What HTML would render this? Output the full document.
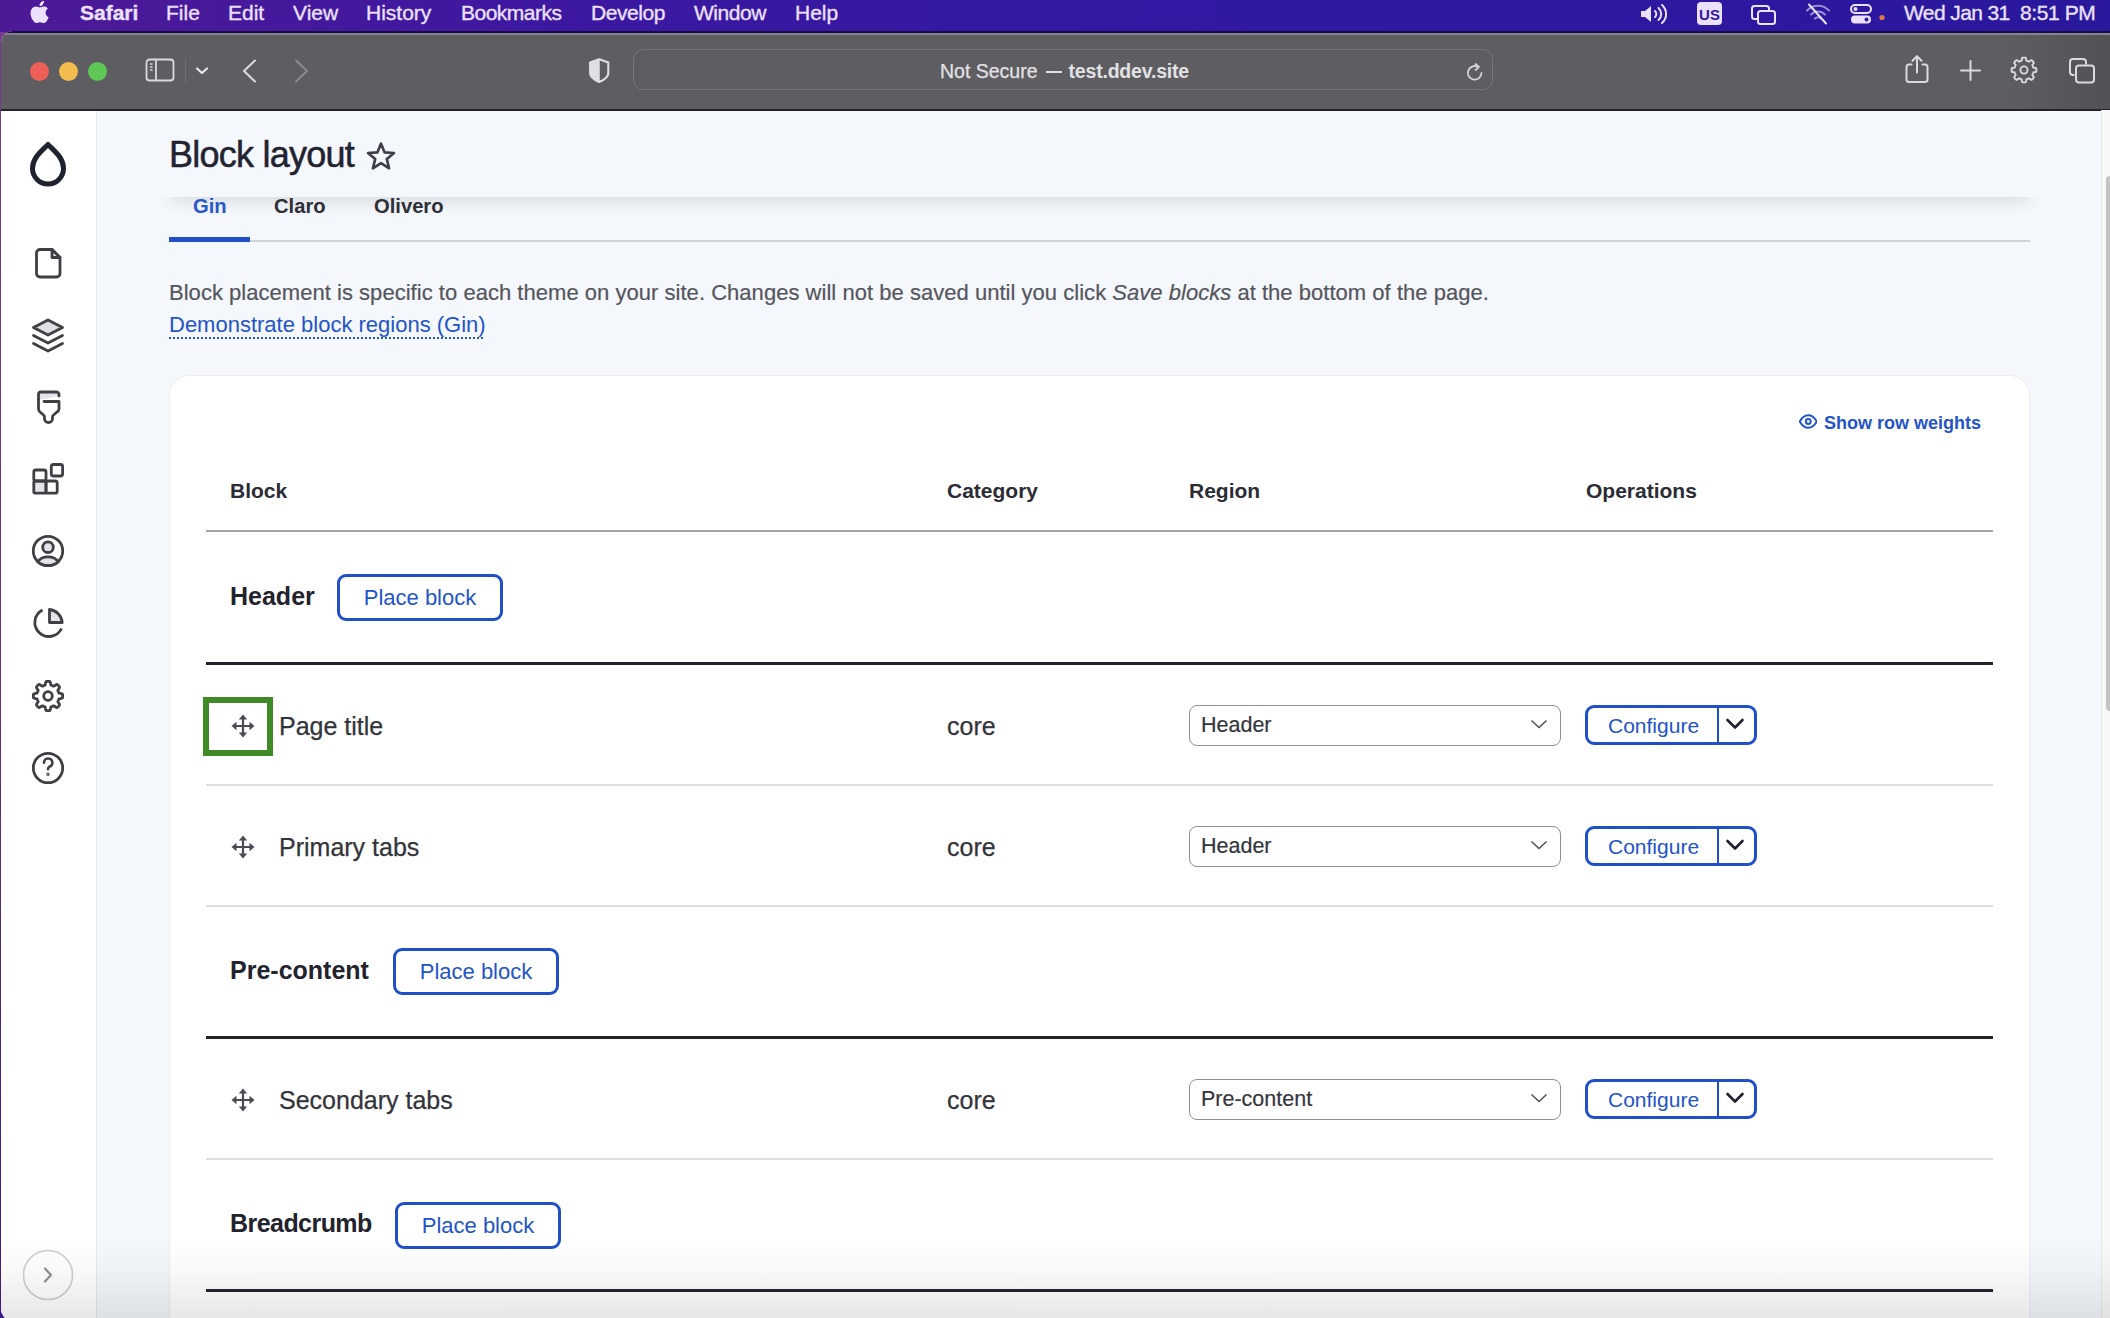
<!DOCTYPE html>
<html><head><meta charset="utf-8">
<style>
*{margin:0;padding:0;box-sizing:border-box}
html,body{width:2110px;height:1318px;overflow:hidden}
body{position:relative;background:linear-gradient(180deg,#7a3a98,#663680 45%,#3b1c8c);font-family:"Liberation Sans",sans-serif}
.a{position:absolute}
#menubar{left:0;top:0;width:2110px;height:32px;background:linear-gradient(90deg,#4d1a97 0%,#3d18a0 25%,#3318a2 50%,#2e18a0 75%,#2a189c 100%)}
.mi{position:absolute;top:0px;font-size:21px;line-height:25px;color:#ece0ff;white-space:nowrap;-webkit-text-stroke:0.35px #ece0ff}
#win{left:1px;top:31px;width:2109px;height:1291px;border-radius:12px 0 0 14px;overflow:hidden;background:#f6f8fb}
#pg{left:-1px;top:-31px;width:2110px;height:1318px}
#toolbar{left:1px;top:32px;width:2109px;height:77px;background:linear-gradient(90deg,#5e5d62 0%,#5e5d62 95%,#525156 100%)}
#tl1{left:0;top:31px;width:2110px;height:2px;background:#1a0c48}
#tl2{left:0;top:33px;width:2110px;height:1.5px;background:#85848a}
#tl3{left:0;top:109px;width:2110px;height:2px;background:#232328}
#content{left:0;top:111px;width:2110px;height:1208px;background:#f4f7fb}
#sidebar{left:1px;top:111px;width:96px;height:1208px;background:#fff;border-right:1px solid #e6e8ec}
#hdrbar{left:165px;top:111px;width:1870px;height:86px;background:#f4f7fb;box-shadow:0 10px 16px -6px rgba(0,0,0,0.12)}
#hdrbg{left:97px;top:111px;width:2013px;height:86px;background:#f4f7fb}
.t{position:absolute;white-space:nowrap;line-height:1}
#title{left:169px;top:137px;font-size:36px;color:#222330;letter-spacing:-0.75px;-webkit-text-stroke:0.5px #222330}
.tab{top:196px;font-size:20.2px;font-weight:bold;color:#2e2f37}
#desc{left:169px;top:282px;font-size:22px;color:#55565d;-webkit-text-stroke:0.2px #55565d;letter-spacing:0.03px}
#demo{left:169px;top:314px;font-size:22px;color:#2354c8;text-decoration:underline dotted 1.5px;text-underline-offset:5px}
#card{left:169px;top:375px;width:1861px;height:1000px;background:#fff;border-radius:20px;border:1px solid #eceef1}
.th{top:480px;font-size:21px;font-weight:bold;color:#2b2c35}
.hline{position:absolute;left:206px;width:1787px;height:2px;background:#a3a3a8}
.thick{position:absolute;left:206px;width:1787px;height:3px;background:#22232d}
.thin{position:absolute;left:206px;width:1787px;height:2px;background:#dedfe3}
.rg{font-size:25px;font-weight:bold;color:#22232d}
.btn{position:absolute;border:3px solid #1f50c8;border-radius:9px;background:#fff;color:#2354c8;font-size:22px;text-align:center}
.bt{font-size:25px;color:#33343b;-webkit-text-stroke:0.25px #33343b}
.cat{font-size:25px;color:#33343b;-webkit-text-stroke:0.25px #33343b}
.selt{position:absolute;left:1201px;font-size:21.5px;color:#34353c;-webkit-text-stroke:0.2px #34353c;white-space:nowrap;line-height:1}
.mv{position:absolute;left:230px}
.sel{position:absolute;left:1189px;width:372px;height:41px;border:1.5px solid #8f9096;border-radius:8px;background:#fff}
.cfg{position:absolute;left:1585px;width:172px;height:40px;border:3px solid #1f50c8;border-radius:9px;background:#fff}
.dot{width:19px;height:19px;border-radius:50%}
#url{left:632px;top:17px;width:860px;height:41px;border:1.5px solid #77767b;border-radius:10px}
</style></head>
<body>
<div id="menubar" class="a">
  <svg class="a" style="left:29px;top:-2px" width="24" height="28.4" viewBox="0 0 22 26"><path fill="#ece0ff" d="M15.2 13.6 c0-2.6 2.1-3.8 2.2-3.9 -1.2-1.8-3.1-2-3.7-2 -1.6-.2-3.1.9-3.9.9 -.8 0-2-.9-3.3-.9 -1.7 0-3.3 1-4.2 2.5 -1.8 3.1-.5 7.7 1.3 10.2 .9 1.2 1.9 2.6 3.2 2.6 1.3-.1 1.8-.8 3.3-.8 1.6 0 2 .8 3.4.8 1.4 0 2.3-1.3 3.1-2.5 1-1.4 1.4-2.8 1.4-2.9 0 0-2.8-1.1-2.8-4.1z M12.7 5.9 c.7-.9 1.2-2.1 1.1-3.3 -1 0-2.3.7-3 1.6 -.7.8-1.3 2-1.1 3.2 1.1.1 2.3-.6 3-1.5z"/></svg>
  <svg class="a" style="left:1638px;top:2px" width="34" height="24" viewBox="0 0 34 24" fill="none" stroke="#ece0ff" stroke-linecap="round"><path d="M3 9 H7 L13 4 V20 L7 15 H3 Z" fill="#ece0ff" stroke="none"/><path d="M17 9 A4 4 0 0 1 17 15" stroke-width="2"/><path d="M20.5 6 A8 8 0 0 1 20.5 18" stroke-width="2"/><path d="M24 3 A12 12 0 0 1 24 21" stroke-width="2"/></svg>
  <div class="a" style="left:1697px;top:2px;width:25px;height:23px;background:#ece0ff;border-radius:4px;color:#3318a2;font-size:15px;font-weight:bold;line-height:25px;text-align:center">US</div>
  <svg class="a" style="left:1749px;top:2px" width="30" height="24" viewBox="0 0 30 24" fill="none" stroke="#ece0ff" stroke-width="2"><rect x="3" y="4" width="17" height="13" rx="2.5"/><rect x="9" y="9" width="17" height="13" rx="2.5" fill="#3318a2"/></svg>
  <svg class="a" style="left:1804px;top:2px" width="28" height="24" viewBox="0 0 28 24" fill="none" stroke="#9d8fd6" stroke-width="2" stroke-linecap="round"><path d="M3 8.5 A15 15 0 0 1 25 8.5"/><path d="M7 12.5 A9.5 9.5 0 0 1 21 12.5"/><path d="M11 16.5 A4 4 0 0 1 17 16.5"/><path d="M5 2.5 L22 21.5" stroke="#ece0ff"/></svg>
  <svg class="a" style="left:1849px;top:2px" width="40" height="24" viewBox="0 0 40 24" fill="none"><rect x="2" y="3" width="20" height="8" rx="4" stroke="#ece0ff" stroke-width="2"/><circle cx="6.5" cy="7" r="2" fill="#ece0ff"/><rect x="2" y="13.5" width="20" height="8" rx="4" fill="#ece0ff"/><circle cx="17.5" cy="17.5" r="2" fill="#3318a2"/><circle cx="33" cy="15.5" r="2.6" fill="#e07a4a"/></svg>
  <span class="mi" style="left:80px;font-weight:bold">Safari</span>
  <span class="mi" style="left:166px">File</span>
  <span class="mi" style="left:228px">Edit</span>
  <span class="mi" style="left:293px">View</span>
  <span class="mi" style="left:366px">History</span>
  <span class="mi" style="left:461px;letter-spacing:-0.5px">Bookmarks</span>
  <span class="mi" style="left:591px;letter-spacing:-0.45px">Develop</span>
  <span class="mi" style="left:694px;letter-spacing:-0.45px">Window</span>
  <span class="mi" style="left:795px">Help</span>
  <span class="mi" style="left:1904px;letter-spacing:-0.6px">Wed Jan 31</span><span class="mi" style="left:2020px;letter-spacing:-0.4px">8:51 PM</span>
</div>
<div id="win" class="a"><div id="pg" class="a">
  <div id="toolbar" class="a">
    <div class="a dot" style="left:29px;top:30px;background:#ee5f57"></div>
    <div class="a dot" style="left:58px;top:30px;background:#f3bc4f"></div>
    <div class="a dot" style="left:87px;top:30px;background:#5fc756"></div>
    <svg class="a" style="left:140px;top:24px" width="40" height="30" viewBox="0 0 40 30" fill="none" stroke="#dadade" stroke-width="1.8">
      <rect x="5.5" y="3.5" width="27" height="21" rx="3"/>
      <line x1="15" y1="3.5" x2="15" y2="24.5"/>
      <line x1="9" y1="8" x2="11.5" y2="8" stroke-width="1.3"/><line x1="9" y1="11" x2="11.5" y2="11" stroke-width="1.3"/><line x1="9" y1="14" x2="11.5" y2="14" stroke-width="1.3"/>
    </svg>
    <div class="a" style="left:184px;top:26px;width:1px;height:25px;background:#6d6c71"></div>
    <svg class="a" style="left:193px;top:34px" width="16" height="10" viewBox="0 0 16 10" fill="none" stroke="#e8e8ea" stroke-width="2.2" stroke-linecap="round" stroke-linejoin="round"><path d="M3 2.5 L8 7 L13 2.5"/></svg>
    <svg class="a" style="left:238px;top:26px" width="22" height="26" viewBox="0 0 22 26" fill="none" stroke="#dadade" stroke-width="2" stroke-linecap="round" stroke-linejoin="round"><path d="M16 2.5 L5 13 L16 23.5"/></svg>
    <svg class="a" style="left:289px;top:26px" width="22" height="26" viewBox="0 0 22 26" fill="none" stroke="#8b8a8f" stroke-width="2" stroke-linecap="round" stroke-linejoin="round"><path d="M6 2.5 L17 13 L6 23.5"/></svg>
    <svg class="a" style="left:585px;top:24px" width="28" height="30" viewBox="0 0 28 30"><path d="M13.2 3.2 L22.3 6.4 V17 C22.3 21 18 24 13.2 26 C8.4 24 4.1 21 4.1 17 V6.4 Z" fill="none" stroke="#e0e0e4" stroke-width="2.1" stroke-linejoin="round"/><path d="M13.2 3.2 V26 C8.4 24 4.1 21 4.1 17 V6.4 Z" fill="#e0e0e4" stroke="#e0e0e4" stroke-width="1" stroke-linejoin="round"/></svg>
    <div class="a" id="url"></div>
    <div class="a" style="left:0;top:24px;width:2109px;text-align:center;padding-left:16px;font-size:19.5px;line-height:30px;color:#e9e9ec;white-space:nowrap"><span style="position:absolute;left:939px;color:#e2e2e5;-webkit-text-stroke:0.25px #e2e2e5">Not Secure<span style="display:inline-block;width:16px;height:1.8px;background:#e2e2e5;vertical-align:middle;margin:0 7px 0 8px;position:relative;top:-1px"></span><b style="font-weight:bold;letter-spacing:-0.2px;-webkit-text-stroke:0">test.ddev.site</b></span></div>
    <svg class="a" style="left:1462px;top:28.5px" width="24" height="24" viewBox="0 0 24 24" fill="none" stroke="#d5d5d8" stroke-width="1.8" stroke-linecap="round"><path d="M18.5 12 A6.8 6.8 0 1 1 14.8 5.8"/><path d="M12.5 3 L16 5.9 L12.6 9" stroke-linejoin="round"/></svg>
    <svg class="a" style="left:1900px;top:20px" width="32" height="36" viewBox="0 0 32 36" fill="none" stroke="#dadade" stroke-width="2" stroke-linecap="round" stroke-linejoin="round"><path d="M10.5 12.5 H8 A2.5 2.5 0 0 0 5.5 15 V27.5 A2.5 2.5 0 0 0 8 30 H24 A2.5 2.5 0 0 0 26.5 27.5 V15 A2.5 2.5 0 0 0 24 12.5 H21.5"/><path d="M16 4.5 V20.5"/><path d="M11.5 8.8 L16 4.3 L20.5 8.8"/></svg>
    <svg class="a" style="left:1956px;top:26px" width="26" height="26" viewBox="0 0 26 26" fill="none" stroke="#dadade" stroke-width="2" stroke-linecap="round"><path d="M13.5 3 V22 M4 12.5 H23"/></svg>
    <svg class="a" style="left:2007px;top:22px" width="32" height="32" viewBox="0 0 32 32" fill="none" stroke="#dadade" stroke-width="1.9" stroke-linejoin="round"><path d="M28.40 16.00 L28.40 16.24 L28.39 16.49 L28.38 16.73 L28.36 16.97 L28.34 17.22 L28.31 17.46 L28.25 17.69 L27.94 17.89 L27.43 18.04 L26.79 18.15 L26.15 18.23 L25.63 18.31 L25.33 18.43 L25.24 18.61 L25.19 18.79 L25.13 18.97 L25.07 19.15 L25.01 19.32 L24.94 19.50 L24.87 19.67 L24.80 19.85 L24.72 20.02 L24.64 20.19 L24.55 20.36 L24.47 20.53 L24.38 20.69 L24.31 20.87 L24.45 21.18 L24.75 21.60 L25.15 22.11 L25.52 22.64 L25.78 23.11 L25.86 23.46 L25.74 23.68 L25.59 23.87 L25.43 24.05 L25.27 24.24 L25.11 24.42 L24.94 24.59 L24.77 24.77 L24.59 24.94 L24.42 25.11 L24.24 25.27 L24.05 25.43 L23.87 25.59 L23.68 25.74 L23.46 25.86 L23.11 25.78 L22.64 25.52 L22.11 25.15 L21.60 24.75 L21.18 24.45 L20.87 24.31 L20.69 24.38 L20.53 24.47 L20.36 24.55 L20.19 24.64 L20.02 24.72 L19.85 24.80 L19.67 24.87 L19.50 24.94 L19.32 25.01 L19.15 25.07 L18.97 25.13 L18.79 25.19 L18.61 25.24 L18.43 25.33 L18.31 25.63 L18.23 26.15 L18.15 26.79 L18.04 27.43 L17.89 27.94 L17.69 28.25 L17.46 28.31 L17.22 28.34 L16.97 28.36 L16.73 28.38 L16.49 28.39 L16.24 28.40 L16.00 28.40 L15.76 28.40 L15.51 28.39 L15.27 28.38 L15.03 28.36 L14.78 28.34 L14.54 28.31 L14.31 28.25 L14.11 27.94 L13.96 27.43 L13.85 26.79 L13.77 26.15 L13.69 25.63 L13.57 25.33 L13.39 25.24 L13.21 25.19 L13.03 25.13 L12.85 25.07 L12.68 25.01 L12.50 24.94 L12.33 24.87 L12.15 24.80 L11.98 24.72 L11.81 24.64 L11.64 24.55 L11.47 24.47 L11.31 24.38 L11.13 24.31 L10.82 24.45 L10.40 24.75 L9.89 25.15 L9.36 25.52 L8.89 25.78 L8.54 25.86 L8.32 25.74 L8.13 25.59 L7.95 25.43 L7.76 25.27 L7.58 25.11 L7.41 24.94 L7.23 24.77 L7.06 24.59 L6.89 24.42 L6.73 24.24 L6.57 24.05 L6.41 23.87 L6.26 23.68 L6.14 23.46 L6.22 23.11 L6.48 22.64 L6.85 22.11 L7.25 21.60 L7.55 21.18 L7.69 20.87 L7.62 20.69 L7.53 20.53 L7.45 20.36 L7.36 20.19 L7.28 20.02 L7.20 19.85 L7.13 19.67 L7.06 19.50 L6.99 19.32 L6.93 19.15 L6.87 18.97 L6.81 18.79 L6.76 18.61 L6.67 18.43 L6.37 18.31 L5.85 18.23 L5.21 18.15 L4.57 18.04 L4.06 17.89 L3.75 17.69 L3.69 17.46 L3.66 17.22 L3.64 16.97 L3.62 16.73 L3.61 16.49 L3.60 16.24 L3.60 16.00 L3.60 15.76 L3.61 15.51 L3.62 15.27 L3.64 15.03 L3.66 14.78 L3.69 14.54 L3.75 14.31 L4.06 14.11 L4.57 13.96 L5.21 13.85 L5.85 13.77 L6.37 13.69 L6.67 13.57 L6.76 13.39 L6.81 13.21 L6.87 13.03 L6.93 12.85 L6.99 12.68 L7.06 12.50 L7.13 12.33 L7.20 12.15 L7.28 11.98 L7.36 11.81 L7.45 11.64 L7.53 11.47 L7.62 11.31 L7.69 11.13 L7.55 10.82 L7.25 10.40 L6.85 9.89 L6.48 9.36 L6.22 8.89 L6.14 8.54 L6.26 8.32 L6.41 8.13 L6.57 7.95 L6.73 7.76 L6.89 7.58 L7.06 7.41 L7.23 7.23 L7.41 7.06 L7.58 6.89 L7.76 6.73 L7.95 6.57 L8.13 6.41 L8.32 6.26 L8.54 6.14 L8.89 6.22 L9.36 6.48 L9.89 6.85 L10.40 7.25 L10.82 7.55 L11.13 7.69 L11.31 7.62 L11.47 7.53 L11.64 7.45 L11.81 7.36 L11.98 7.28 L12.15 7.20 L12.33 7.13 L12.50 7.06 L12.68 6.99 L12.85 6.93 L13.03 6.87 L13.21 6.81 L13.39 6.76 L13.57 6.67 L13.69 6.37 L13.77 5.85 L13.85 5.21 L13.96 4.57 L14.11 4.06 L14.31 3.75 L14.54 3.69 L14.78 3.66 L15.03 3.64 L15.27 3.62 L15.51 3.61 L15.76 3.60 L16.00 3.60 L16.24 3.60 L16.49 3.61 L16.73 3.62 L16.97 3.64 L17.22 3.66 L17.46 3.69 L17.69 3.75 L17.89 4.06 L18.04 4.57 L18.15 5.21 L18.23 5.85 L18.31 6.37 L18.43 6.67 L18.61 6.76 L18.79 6.81 L18.97 6.87 L19.15 6.93 L19.32 6.99 L19.50 7.06 L19.67 7.13 L19.85 7.20 L20.02 7.28 L20.19 7.36 L20.36 7.45 L20.53 7.53 L20.69 7.62 L20.87 7.69 L21.18 7.55 L21.60 7.25 L22.11 6.85 L22.64 6.48 L23.11 6.22 L23.46 6.14 L23.68 6.26 L23.87 6.41 L24.05 6.57 L24.24 6.73 L24.42 6.89 L24.59 7.06 L24.77 7.23 L24.94 7.41 L25.11 7.58 L25.27 7.76 L25.43 7.95 L25.59 8.13 L25.74 8.32 L25.86 8.54 L25.78 8.89 L25.52 9.36 L25.15 9.89 L24.75 10.40 L24.45 10.82 L24.31 11.13 L24.38 11.31 L24.47 11.47 L24.55 11.64 L24.64 11.81 L24.72 11.98 L24.80 12.15 L24.87 12.33 L24.94 12.50 L25.01 12.68 L25.07 12.85 L25.13 13.03 L25.19 13.21 L25.24 13.39 L25.33 13.57 L25.63 13.69 L26.15 13.77 L26.79 13.85 L27.43 13.96 L27.94 14.11 L28.25 14.31 L28.31 14.54 L28.34 14.78 L28.36 15.03 L28.38 15.27 L28.39 15.51 L28.40 15.76 Z"/><circle cx="16" cy="16" r="3.6"/></svg>
    <svg class="a" style="left:2066px;top:24px" width="32" height="30" viewBox="0 0 32 30" fill="none" stroke="#dadade" stroke-width="2"><path d="M7.5 19 H6 A3 3 0 0 1 3 16 V6 A3 3 0 0 1 6 3 H16 A3 3 0 0 1 19 6 V8.5"/><rect x="9" y="9.5" width="18" height="17" rx="3"/></svg>
  </div>
  <div id="tl1" class="a"></div><div id="tl2" class="a"></div><div id="tl3" class="a"></div>
  <div id="content" class="a"></div>
  <div id="sidebar" class="a"></div>
  <div id="hdrbar" class="a"></div>
  <div id="hdrbg" class="a"></div>
  <svg class="a" style="left:27px;top:138px" width="42" height="52" viewBox="0 0 42 52" fill="none" stroke="#1f2230" stroke-width="5"><path d="M21 6.5 C14 13.5 5.5 20 5.5 30.5 A15.5 15.5 0 0 0 36.5 30.5 C36.5 20 28 13.5 21 6.5 Z" stroke-linejoin="round"/></svg>
  <svg class="a" style="left:28px;top:243px" width="40" height="40" viewBox="0 0 40 40" fill="none" stroke="#3f4045" stroke-width="2.8" stroke-linejoin="round"><path d="M24 6.5 H12 A3.5 3.5 0 0 0 8.5 10 V30.5 A3.5 3.5 0 0 0 12 34 H28.5 A3.5 3.5 0 0 0 32 30.5 V14.5 Z"/><path d="M24 6.5 V14.5 H32 Z" fill="#e3e4e8"/></svg>
  <svg class="a" style="left:28px;top:315px" width="40" height="40" viewBox="0 0 40 40" fill="none" stroke="#3f4045" stroke-width="2.8" stroke-linejoin="round" stroke-linecap="round"><path d="M20 5 L34.5 12.5 L20 20 L5.5 12.5 Z" fill="#dfe0e4"/><path d="M5.5 20.5 L20 28 L34.5 20.5"/><path d="M5.5 28.5 L20 36 L34.5 28.5"/></svg>
  <svg class="a" style="left:28px;top:387px" width="40" height="40" viewBox="0 0 40 40" fill="none" stroke="#3f4045" stroke-width="2.8" stroke-linejoin="round" stroke-linecap="round"><path d="M10.5 13 V7.5 A2.5 2.5 0 0 1 13 5 H28.5 A2.5 2.5 0 0 1 31 7.5 V9" fill="#e3e4e8"/><path d="M10.5 13 V22 A4 4 0 0 0 12 25 L15.5 28 A2.5 2.5 0 0 1 16.5 30 V31.5 A4 4 0 0 0 24.5 31.5 V30 A2.5 2.5 0 0 1 25.5 28 L29 25 A4 4 0 0 0 31 22 V14.5 H16"/></svg>
  <svg class="a" style="left:28px;top:459px" width="40" height="40" viewBox="0 0 40 40" fill="none" stroke="#3f4045" stroke-width="2.8" stroke-linejoin="round"><rect x="5.8" y="22" width="12.2" height="12.2" rx="1.2" fill="#e3e4e8"/><rect x="5.8" y="11" width="12.2" height="11" rx="2"/><rect x="18" y="22" width="11.2" height="12.2" rx="2"/><rect x="23.3" y="5.5" width="11.3" height="11.5" rx="2"/></svg>
  <svg class="a" style="left:28px;top:531px" width="40" height="40" viewBox="0 0 40 40" fill="none" stroke="#3f4045" stroke-width="2.8"><circle cx="20" cy="20" r="14.7"/><circle cx="20" cy="16.2" r="5.3" fill="#e3e4e8"/><path d="M9.8 30.8 C12 27 16 25.8 20 25.8 C24 25.8 28 27 30.2 30.8 C27 33.6 23.5 34.5 20 34.5 C16.5 34.5 13 33.6 9.8 30.8 Z" fill="#e3e4e8"/></svg>
  <svg class="a" style="left:28px;top:603px" width="40" height="40" viewBox="0 0 40 40" fill="none" stroke="#3f4045" stroke-width="2.8"><path d="M14.5 7 A14 14 0 1 0 33.5 25.5"/><path d="M21.5 6.5 A14 14 0 0 1 34.2 19.5 H21.5 Z" fill="#e3e4e8" stroke-linejoin="round"/></svg>
  <svg class="a" style="left:28px;top:676px" width="40" height="40" viewBox="0 0 40 40" fill="none" stroke="#3f4045" stroke-width="2.8" stroke-linejoin="round"><path d="M34.70 20.00 L34.69 20.38 L34.68 20.77 L34.65 21.15 L34.62 21.54 L34.43 21.90 L33.91 22.20 L33.13 22.43 L32.27 22.61 L31.49 22.76 L30.96 22.94 L30.74 23.18 L30.65 23.46 L30.56 23.74 L30.46 24.01 L30.35 24.29 L30.23 24.56 L30.11 24.82 L29.98 25.08 L29.84 25.34 L29.83 25.68 L30.08 26.18 L30.52 26.83 L31.01 27.57 L31.39 28.28 L31.54 28.86 L31.42 29.25 L31.18 29.55 L30.92 29.84 L30.66 30.12 L30.39 30.39 L30.12 30.66 L29.84 30.92 L29.55 31.18 L29.25 31.42 L28.86 31.54 L28.28 31.39 L27.57 31.01 L26.83 30.52 L26.18 30.08 L25.68 29.83 L25.34 29.84 L25.08 29.98 L24.82 30.11 L24.56 30.23 L24.29 30.35 L24.01 30.46 L23.74 30.56 L23.46 30.65 L23.18 30.74 L22.94 30.96 L22.76 31.49 L22.61 32.27 L22.43 33.13 L22.20 33.91 L21.90 34.43 L21.54 34.62 L21.15 34.65 L20.77 34.68 L20.38 34.69 L20.00 34.70 L19.62 34.69 L19.23 34.68 L18.85 34.65 L18.46 34.62 L18.10 34.43 L17.80 33.91 L17.57 33.13 L17.39 32.27 L17.24 31.49 L17.06 30.96 L16.82 30.74 L16.54 30.65 L16.26 30.56 L15.99 30.46 L15.71 30.35 L15.44 30.23 L15.18 30.11 L14.92 29.98 L14.66 29.84 L14.32 29.83 L13.82 30.08 L13.17 30.52 L12.43 31.01 L11.72 31.39 L11.14 31.54 L10.75 31.42 L10.45 31.18 L10.16 30.92 L9.88 30.66 L9.61 30.39 L9.34 30.12 L9.08 29.84 L8.82 29.55 L8.58 29.25 L8.46 28.86 L8.61 28.28 L8.99 27.57 L9.48 26.83 L9.92 26.18 L10.17 25.68 L10.16 25.34 L10.02 25.08 L9.89 24.82 L9.77 24.56 L9.65 24.29 L9.54 24.01 L9.44 23.74 L9.35 23.46 L9.26 23.18 L9.04 22.94 L8.51 22.76 L7.73 22.61 L6.87 22.43 L6.09 22.20 L5.57 21.90 L5.38 21.54 L5.35 21.15 L5.32 20.77 L5.31 20.38 L5.30 20.00 L5.31 19.62 L5.32 19.23 L5.35 18.85 L5.38 18.46 L5.57 18.10 L6.09 17.80 L6.87 17.57 L7.73 17.39 L8.51 17.24 L9.04 17.06 L9.26 16.82 L9.35 16.54 L9.44 16.26 L9.54 15.99 L9.65 15.71 L9.77 15.44 L9.89 15.18 L10.02 14.92 L10.16 14.66 L10.17 14.32 L9.92 13.82 L9.48 13.17 L8.99 12.43 L8.61 11.72 L8.46 11.14 L8.58 10.75 L8.82 10.45 L9.08 10.16 L9.34 9.88 L9.61 9.61 L9.88 9.34 L10.16 9.08 L10.45 8.82 L10.75 8.58 L11.14 8.46 L11.72 8.61 L12.43 8.99 L13.17 9.48 L13.82 9.92 L14.32 10.17 L14.66 10.16 L14.92 10.02 L15.18 9.89 L15.44 9.77 L15.71 9.65 L15.99 9.54 L16.26 9.44 L16.54 9.35 L16.82 9.26 L17.06 9.04 L17.24 8.51 L17.39 7.73 L17.57 6.87 L17.80 6.09 L18.10 5.57 L18.46 5.38 L18.85 5.35 L19.23 5.32 L19.62 5.31 L20.00 5.30 L20.38 5.31 L20.77 5.32 L21.15 5.35 L21.54 5.38 L21.90 5.57 L22.20 6.09 L22.43 6.87 L22.61 7.73 L22.76 8.51 L22.94 9.04 L23.18 9.26 L23.46 9.35 L23.74 9.44 L24.01 9.54 L24.29 9.65 L24.56 9.77 L24.82 9.89 L25.08 10.02 L25.34 10.16 L25.68 10.17 L26.18 9.92 L26.83 9.48 L27.57 8.99 L28.28 8.61 L28.86 8.46 L29.25 8.58 L29.55 8.82 L29.84 9.08 L30.12 9.34 L30.39 9.61 L30.66 9.88 L30.92 10.16 L31.18 10.45 L31.42 10.75 L31.54 11.14 L31.39 11.72 L31.01 12.43 L30.52 13.17 L30.08 13.82 L29.83 14.32 L29.84 14.66 L29.98 14.92 L30.11 15.18 L30.23 15.44 L30.35 15.71 L30.46 15.99 L30.56 16.26 L30.65 16.54 L30.74 16.82 L30.96 17.06 L31.49 17.24 L32.27 17.39 L33.13 17.57 L33.91 17.80 L34.43 18.10 L34.62 18.46 L34.65 18.85 L34.68 19.23 L34.69 19.62 Z"/><circle cx="20" cy="20" r="4.3"/></svg>
  <svg class="a" style="left:28px;top:748px" width="40" height="40" viewBox="0 0 40 40" fill="none" stroke="#3f4045" stroke-width="2.8" stroke-linecap="round"><circle cx="20" cy="20" r="14.7"/><path d="M16 14.8 A4.2 4.2 0 1 1 21.3 18.8 C20.4 19.3 20 20 20 21.2" stroke-width="2.6"/><circle cx="20" cy="26.3" r="0.5" fill="#3f4045" stroke-width="2.4"/></svg>
  <svg class="a" style="left:22px;top:1249px" width="52" height="52" viewBox="0 0 52 52" fill="none"><circle cx="26" cy="26" r="24.5" stroke="#cfcfd2" stroke-width="1.6"/><path d="M23 19.5 L29 26 L23 32.5" stroke="#8d8e93" stroke-width="2.2" stroke-linecap="round" stroke-linejoin="round"/></svg>
  <div class="t" id="title">Block layout</div>
  <svg class="a" style="left:364px;top:140px" width="34" height="34" viewBox="0 0 34 34" fill="none" stroke="#3c3d48" stroke-width="2.6" stroke-linejoin="round"><path d="M17 3.5 L20.6 12.4 L30 13 L22.8 19.1 L25.1 28.3 L17 23.2 L8.9 28.3 L11.2 19.1 L4 13 L13.4 12.4 Z"/></svg>
  <div class="t tab" style="left:193px;color:#2757c9">Gin</div>
  <div class="t tab" style="left:274px">Claro</div>
  <div class="t tab" style="left:374px">Olivero</div>
  <div class="a" style="left:169px;top:240px;width:1861px;height:2px;background:#d2d4d9"></div>
  <div class="a" style="left:169px;top:237px;width:81px;height:5px;background:#1f50c8"></div>
  <div class="t" id="desc">Block placement is specific to each theme on your site. Changes will not be saved until you click <i>Save blocks</i> at the bottom of the page.</div>
  <div class="t" id="demo">Demonstrate block regions (Gin)</div>
  <div class="a" id="card"></div>
  <div class="t" style="left:1824px;top:413.5px;font-size:18px;font-weight:bold;color:#2354c8">Show row weights</div>
  <div class="t th" style="left:230px">Block</div>
  <div class="t th" style="left:947px">Category</div>
  <div class="t th" style="left:1189px">Region</div>
  <div class="t th" style="left:1586px">Operations</div>
  <div class="hline" style="top:530px"></div>
  <div class="t rg" style="left:230px;top:584px">Header</div>
  <div class="btn" style="left:337px;top:574px;width:166px;height:47px;line-height:41px">Place block</div>
  <div class="thick" style="top:662px"></div>
  <div class="t bt" style="left:279px;top:714px">Page title</div>
  <div class="t cat" style="left:947px;top:714px">core</div>
  <div class="sel" style="top:705px"></div>
  <div class="cfg" style="top:705px"></div>
  <svg class="mv" style="top:713px" width="26" height="26" viewBox="0 0 26 26"><g fill="#4a4b55"><path d="M13 1.5 L17.2 6.5 H8.8 Z"/><path d="M13 24.5 L17.2 19.5 H8.8 Z"/><path d="M1.5 13 L6.5 8.8 V17.2 Z"/><path d="M24.5 13 L19.5 8.8 V17.2 Z"/></g><path d="M13 5 V21 M5 13 H21" stroke="#4a4b55" stroke-width="2.2"/></svg>
  <div class="selt" style="top:715px">Header</div>
  <svg class="a" style="left:1529px;top:717px" width="20" height="14" viewBox="0 0 20 14" fill="none" stroke="#55565e" stroke-width="1.7" stroke-linecap="round" stroke-linejoin="round"><path d="M3 4 L10 10.5 L17 4"/></svg>
  <div class="t" style="left:1608px;top:714.5px;font-size:21px;color:#2354c8">Configure</div>
  <div class="a" style="left:1717px;top:705px;width:1.5px;height:40px;background:#1f50c8"></div>
  <svg class="a" style="left:1724px;top:716px" width="22" height="16" viewBox="0 0 22 16" fill="none" stroke="#1f2230" stroke-width="2.6" stroke-linecap="round" stroke-linejoin="round"><path d="M3.5 4 L11 11.5 L18.5 4"/></svg>
  <div class="thin" style="top:784px"></div>
  <div class="t bt" style="left:279px;top:835px">Primary tabs</div>
  <div class="t cat" style="left:947px;top:835px">core</div>
  <div class="sel" style="top:826px"></div>
  <div class="cfg" style="top:826px"></div>
  <svg class="mv" style="top:834px" width="26" height="26" viewBox="0 0 26 26"><g fill="#4a4b55"><path d="M13 1.5 L17.2 6.5 H8.8 Z"/><path d="M13 24.5 L17.2 19.5 H8.8 Z"/><path d="M1.5 13 L6.5 8.8 V17.2 Z"/><path d="M24.5 13 L19.5 8.8 V17.2 Z"/></g><path d="M13 5 V21 M5 13 H21" stroke="#4a4b55" stroke-width="2.2"/></svg>
  <div class="selt" style="top:836px">Header</div>
  <svg class="a" style="left:1529px;top:838px" width="20" height="14" viewBox="0 0 20 14" fill="none" stroke="#55565e" stroke-width="1.7" stroke-linecap="round" stroke-linejoin="round"><path d="M3 4 L10 10.5 L17 4"/></svg>
  <div class="t" style="left:1608px;top:835.5px;font-size:21px;color:#2354c8">Configure</div>
  <div class="a" style="left:1717px;top:826px;width:1.5px;height:40px;background:#1f50c8"></div>
  <svg class="a" style="left:1724px;top:837px" width="22" height="16" viewBox="0 0 22 16" fill="none" stroke="#1f2230" stroke-width="2.6" stroke-linecap="round" stroke-linejoin="round"><path d="M3.5 4 L11 11.5 L18.5 4"/></svg>
  <div class="thin" style="top:905px"></div>
  <div class="t rg" style="left:230px;top:958px">Pre-content</div>
  <div class="btn" style="left:393px;top:948px;width:166px;height:47px;line-height:41px">Place block</div>
  <div class="thick" style="top:1036px"></div>
  <div class="t bt" style="left:279px;top:1088px">Secondary tabs</div>
  <div class="t cat" style="left:947px;top:1088px">core</div>
  <div class="sel" style="top:1079px"></div>
  <div class="cfg" style="top:1079px"></div>
  <svg class="mv" style="top:1087px" width="26" height="26" viewBox="0 0 26 26"><g fill="#4a4b55"><path d="M13 1.5 L17.2 6.5 H8.8 Z"/><path d="M13 24.5 L17.2 19.5 H8.8 Z"/><path d="M1.5 13 L6.5 8.8 V17.2 Z"/><path d="M24.5 13 L19.5 8.8 V17.2 Z"/></g><path d="M13 5 V21 M5 13 H21" stroke="#4a4b55" stroke-width="2.2"/></svg>
  <div class="selt" style="top:1089px">Pre-content</div>
  <svg class="a" style="left:1529px;top:1091px" width="20" height="14" viewBox="0 0 20 14" fill="none" stroke="#55565e" stroke-width="1.7" stroke-linecap="round" stroke-linejoin="round"><path d="M3 4 L10 10.5 L17 4"/></svg>
  <div class="t" style="left:1608px;top:1088.5px;font-size:21px;color:#2354c8">Configure</div>
  <div class="a" style="left:1717px;top:1079px;width:1.5px;height:40px;background:#1f50c8"></div>
  <svg class="a" style="left:1724px;top:1090px" width="22" height="16" viewBox="0 0 22 16" fill="none" stroke="#1f2230" stroke-width="2.6" stroke-linecap="round" stroke-linejoin="round"><path d="M3.5 4 L11 11.5 L18.5 4"/></svg>
  <div class="thin" style="top:1158px"></div>
  <div class="t rg" style="left:230px;top:1211px;letter-spacing:-0.55px">Breadcrumb</div>
  <div class="btn" style="left:395px;top:1202px;width:166px;height:47px;line-height:41px">Place block</div>
  <div class="thick" style="top:1289px"></div>
  <div class="a" style="left:203px;top:697px;width:70px;height:59px;border:6px solid #3f8a27"></div>
  <svg class="a" style="left:1798.5px;top:414px" width="18.5" height="15" viewBox="1 2.5 20 15" fill="none" stroke="#2354c8" stroke-width="2.2"><path d="M1.8 10 C4.5 5 7.5 3.2 11 3.2 C14.5 3.2 17.5 5 20.2 10 C17.5 15 14.5 16.8 11 16.8 C7.5 16.8 4.5 15 1.8 10 Z"/><circle cx="11" cy="10" r="2.6"/></svg>
  <div class="a" style="left:2101px;top:110px;width:9px;height:1208px;background:#f8f8f8;border-left:1px solid #e8e8e8"></div>
  <div class="a" style="left:2106px;top:176px;width:5px;height:535px;background:#c3c3c3;border-radius:4px 0 0 4px"></div>
  <div class="a" style="left:0;top:1240px;width:2110px;height:78px;background:linear-gradient(180deg,rgba(0,0,0,0) 0%,rgba(40,40,50,0.03) 40%,rgba(40,40,50,0.11) 100%)"></div>
</div></div>
</body></html>
